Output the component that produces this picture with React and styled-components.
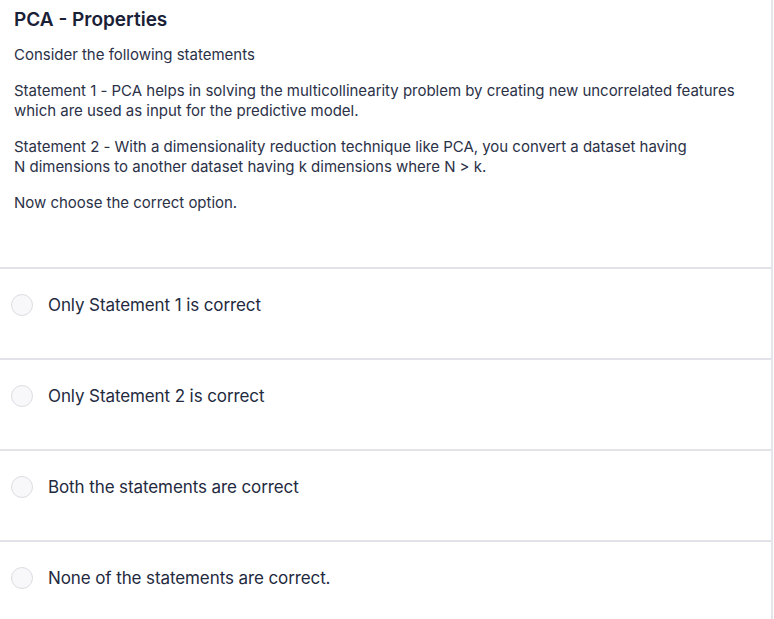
import React from 'react';
import styled, { createGlobalStyle } from 'styled-components';

const GlobalStyle = createGlobalStyle`
  html, body {
    margin: 0;
    padding: 0;
    background: #ffffff;
  }
  body {
    font-family: Inter, "Liberation Sans", Arial, sans-serif;
  }
`;

const Card = styled.div`
  width: 771px;
  min-height: 619px;
  border-right: 2px solid #e4e4ea;
  box-sizing: content-box;
`;

const Question = styled.div`
  padding: 7px 14px 0 14px;
  height: 267px;
  box-sizing: border-box;
`;

const Title = styled.h2`
  margin: 0 0 12px 0;
  font-size: 19px;
  font-weight: 600;
  line-height: 26px;
  color: #1a2136;
`;

const Para = styled.p`
  margin: 0 0 16px 0;
  font-size: 15px;
  line-height: 20px;
  letter-spacing: -0.02px;
  color: #2b3147;
`;

const Options = styled.div`
  display: flex;
  flex-direction: column;
`;

const Option = styled.div`
  height: 91px;
  box-sizing: border-box;
  padding: 25px 0 0 11px;
  border-top: 2px solid #e2e2e8;
  cursor: pointer;
`;

const Line = styled.div`
  display: flex;
  align-items: center;
  gap: 15px;
  height: 22px;
`;

const Radio = styled.span`
  width: 22px;
  height: 22px;
  border-radius: 50%;
  border: 1px solid #dcdde3;
  background: #f8f8fa;
  box-sizing: border-box;
  flex-shrink: 0;
`;

const OptionText = styled.span`
  font-size: 17px;
  line-height: 22px;
  letter-spacing: -0.1px;
  color: #232a40;
`;

const options = [
  'Only Statement 1 is correct',
  'Only Statement 2 is correct',
  'Both the statements are correct',
  'None of the statements are correct.',
];

export default function App() {
  return (
    <>
      <GlobalStyle />
      <Card>
        <Question>
          <Title>PCA - Properties</Title>
          <Para>Consider the following statements</Para>
          <Para>
            Statement 1 - PCA helps in solving the multicollinearity problem by creating new uncorrelated features
            <br />
            which are used as input for the predictive model.
          </Para>
          <Para>
            Statement 2 - With a dimensionality reduction technique like PCA, you convert a dataset having
            <br />
            N dimensions to another dataset having k dimensions where N &gt; k.
          </Para>
          <Para>Now choose the correct option.</Para>
        </Question>
        <Options>
          {options.map((o) => (
            <Option key={o}>
              <Line>
                <Radio />
                <OptionText>{o}</OptionText>
              </Line>
            </Option>
          ))}
        </Options>
      </Card>
    </>
  );
}
